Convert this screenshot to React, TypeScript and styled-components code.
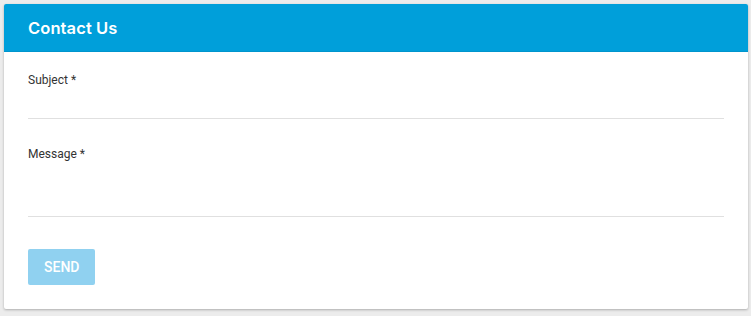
import React from "react";
import styled, { createGlobalStyle } from "styled-components";

const Global = createGlobalStyle`
  html, body { margin: 0; padding: 0; background: #ececec; }
  body { font-family: Roboto, "Liberation Sans", Arial, sans-serif; }
  * { box-sizing: border-box; }
`;

const Page = styled.div`
  padding: 4px 3px 7px 4px;
`;

const Card = styled.div`
  background: #fff;
  border-radius: 2px;
  overflow: hidden;
  box-shadow: 0 1px 3px rgba(0, 0, 0, 0.18), 0 1px 2px rgba(0, 0, 0, 0.1);
`;

const Header = styled.div`
  height: 48px;
  background: #009fda;
  display: flex;
  align-items: center;
  padding: 0 24px;
  box-shadow: inset 0 -1px 0 rgba(0, 0, 0, 0.06);
`;

const Title = styled.h2`
  margin: 0;
  color: #fff;
  font-family: Inter, "Open Sans", sans-serif;
  font-weight: 600;
  font-size: 16.5px;
  letter-spacing: 0.1px;
`;

const Body = styled.form`
  padding: 20px 24px 24px;
  display: flex;
  flex-direction: column;
`;

const Field = styled.label<{ $gap?: number }>`
  display: flex;
  flex-direction: column;
  margin-bottom: ${(p) => p.$gap ?? 0}px;
`;

const Label = styled.span`
  font-size: 12px;
  line-height: 16px;
  color: #333;
`;

const Input = styled.input`
  border: none;
  border-bottom: 1px solid #e0e0e0;
  outline: none;
  height: 31px;
  padding: 0;
  font-family: inherit;
  font-size: 14px;
  background: transparent;
`;

const TextArea = styled.textarea`
  border: none;
  border-bottom: 1px solid #e0e0e0;
  outline: none;
  height: 55px;
  padding: 0;
  resize: none;
  font-family: inherit;
  font-size: 14px;
  background: transparent;
`;

const Actions = styled.div`
  display: flex;
  margin-top: 32px;
`;

const Button = styled.button`
  height: 36px;
  padding: 0 16px;
  border: none;
  border-radius: 2px;
  background: #90d1f0;
  color: #fff;
  font-family: Roboto, sans-serif;
  font-weight: 500;
  font-size: 14px;
  text-transform: uppercase;
  cursor: default;
`;

export default function App() {
  return (
    <>
      <Global />
      <Page>
        <Card>
          <Header>
            <Title>Contact Us</Title>
          </Header>
          <Body onSubmit={(e) => e.preventDefault()}>
            <Field $gap={27}>
              <Label>Subject *</Label>
              <Input type="text" />
            </Field>
            <Field>
              <Label>Message *</Label>
              <TextArea />
            </Field>
            <Actions>
              <Button type="submit" disabled>
                Send
              </Button>
            </Actions>
          </Body>
        </Card>
      </Page>
    </>
  );
}
